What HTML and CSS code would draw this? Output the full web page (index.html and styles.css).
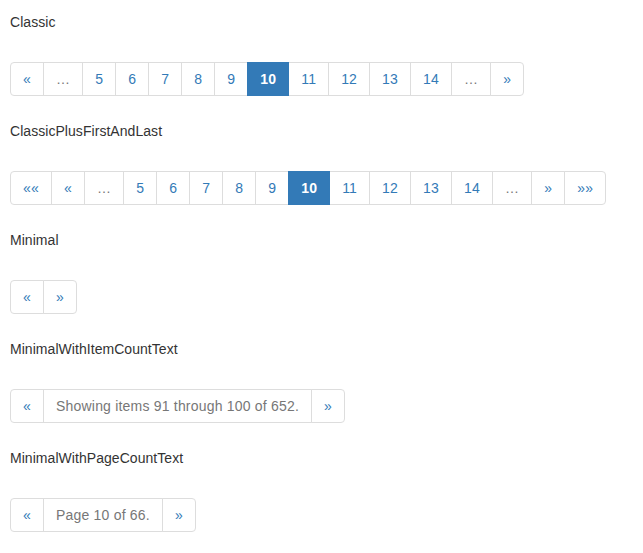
FILE: index.html
```html
<!DOCTYPE html>
<html>
<head>
<meta charset="utf-8">
<link rel="stylesheet" href="styles.css">
</head>
<body>
<div class="page">
  <div class="label">Classic</div>
  <ul class="pagination">
    <li><a>«</a></li>
    <li class="disabled"><a>…</a></li>
    <li><a>5</a></li>
    <li><a>6</a></li>
    <li><a>7</a></li>
    <li><a>8</a></li>
    <li><a>9</a></li>
    <li class="active"><a>10</a></li>
    <li><a>11</a></li>
    <li><a>12</a></li>
    <li><a>13</a></li>
    <li><a>14</a></li>
    <li class="disabled"><a>…</a></li>
    <li><a>»</a></li>
  </ul>

  <div class="label">ClassicPlusFirstAndLast</div>
  <ul class="pagination">
    <li><a>««</a></li>
    <li><a>«</a></li>
    <li class="disabled"><a>…</a></li>
    <li><a>5</a></li>
    <li><a>6</a></li>
    <li><a>7</a></li>
    <li><a>8</a></li>
    <li><a>9</a></li>
    <li class="active"><a>10</a></li>
    <li><a>11</a></li>
    <li><a>12</a></li>
    <li><a>13</a></li>
    <li><a>14</a></li>
    <li class="disabled"><a>…</a></li>
    <li><a>»</a></li>
    <li><a>»»</a></li>
  </ul>

  <div class="label">Minimal</div>
  <ul class="pagination">
    <li><a>«</a></li>
    <li><a>»</a></li>
  </ul>

  <div class="label">MinimalWithItemCountText</div>
  <ul class="pagination">
    <li><a>«</a></li>
    <li class="disabled"><a>Showing items 91 through 100 of 652.</a></li>
    <li><a>»</a></li>
  </ul>

  <div class="label">MinimalWithPageCountText</div>
  <ul class="pagination">
    <li><a>«</a></li>
    <li class="disabled"><a>Page 10 of 66.</a></li>
    <li><a>»</a></li>
  </ul>
</div>
</body>
</html>
```

FILE: styles.css
```css
html, body {
  margin: 0;
  padding: 0;
  background: #fff;
}
body {
  font-family: "Liberation Sans", Arial, sans-serif;
  font-size: 14px;
  line-height: 20px;
  color: #333;
}
.page {
  padding: 12px 10px 0 10px;
}
.label {
  line-height: 20px;
  letter-spacing: 0.05px;
}
.pagination {
  display: flex;
  width: max-content;
  list-style: none;
  margin: 30px 0 25px 0;
  padding: 0;
  letter-spacing: 0.2px;
}
.pagination li a {
  display: block;
  padding: 6px 12px;
  line-height: 20px;
  color: #337ab7;
  background: #fff;
  border: 1px solid #ddd;
  margin-left: -1px;
}
.pagination li:first-child a {
  margin-left: 0;
  border-radius: 4px 0 0 4px;
}
.pagination li:last-child a {
  border-radius: 0 4px 4px 0;
}
.pagination li.active a {
  background: #337ab7;
  border-color: #337ab7;
  color: #fff;
  font-weight: bold;
  position: relative;
}
.pagination li.disabled a {
  color: #777;
}
```
